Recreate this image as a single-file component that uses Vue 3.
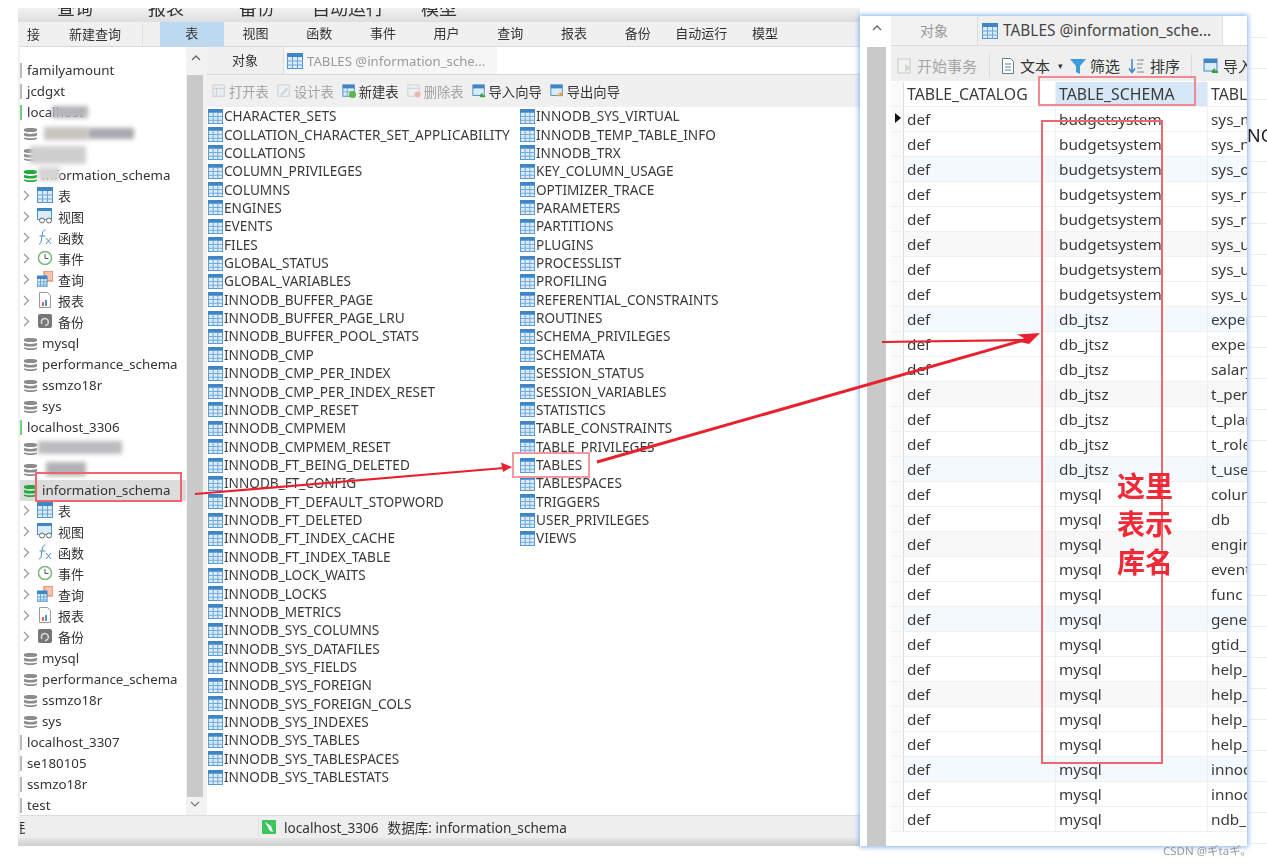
<script setup>
const topMenu = ['查询', '报表', '备份', '自动运行', '模型']
const ribbon = ['表', '视图', '函数', '事件', '用户', '查询', '报表', '备份', '自动运行', '模型']
const groups = [
  { icon: 'i-tbl', label: '表' }, { icon: 'i-view', label: '视图' }, { icon: 'i-fx', label: '函数' },
  { icon: 'i-clock', label: '事件' }, { icon: 'i-query', label: '查询' }, { icon: 'i-report', label: '报表' },
  { icon: 'i-backup', label: '备份' }
]
const groupRows = groups.map(g => ({ ...g, kind: 'group' }))
const db = (label, green, active) => ({ kind: 'db', label, green, active })
const conn = (label, green) => ({ kind: 'conn', label, green })
const tree = [
  conn('familyamount'), conn('jcdgxt'), conn('localhost', true),
  db(''), db(''), db('information_schema', true), ...groupRows,
  db('mysql'), db('performance_schema'), db('ssmzo18r'), db('sys'),
  conn('localhost_3306', true), db(''), db(''), db('information_schema', true, true), ...groupRows,
  db('mysql'), db('performance_schema'), db('ssmzo18r'), db('sys'),
  conn('localhost_3307'), conn('se180105'), conn('ssmzo18r'), conn('test')
]
const objTools = [
  { icon: 'i-open', label: '打开表', dim: true }, { icon: 'i-design', label: '设计表', dim: true },
  { icon: 'i-new', label: '新建表' }, { icon: 'i-del', label: '删除表', dim: true },
  { icon: 'i-imp', label: '导入向导' }, { icon: 'i-exp', label: '导出向导' }
]
const tables = ['CHARACTER_SETS','COLLATION_CHARACTER_SET_APPLICABILITY','COLLATIONS','COLUMN_PRIVILEGES','COLUMNS','ENGINES','EVENTS','FILES','GLOBAL_STATUS','GLOBAL_VARIABLES','INNODB_BUFFER_PAGE','INNODB_BUFFER_PAGE_LRU','INNODB_BUFFER_POOL_STATS','INNODB_CMP','INNODB_CMP_PER_INDEX','INNODB_CMP_PER_INDEX_RESET','INNODB_CMP_RESET','INNODB_CMPMEM','INNODB_CMPMEM_RESET','INNODB_FT_BEING_DELETED','INNODB_FT_CONFIG','INNODB_FT_DEFAULT_STOPWORD','INNODB_FT_DELETED','INNODB_FT_INDEX_CACHE','INNODB_FT_INDEX_TABLE','INNODB_LOCK_WAITS','INNODB_LOCKS','INNODB_METRICS','INNODB_SYS_COLUMNS','INNODB_SYS_DATAFILES','INNODB_SYS_FIELDS','INNODB_SYS_FOREIGN','INNODB_SYS_FOREIGN_COLS','INNODB_SYS_INDEXES','INNODB_SYS_TABLES','INNODB_SYS_TABLESPACES','INNODB_SYS_TABLESTATS','INNODB_SYS_VIRTUAL','INNODB_TEMP_TABLE_INFO','INNODB_TRX','KEY_COLUMN_USAGE','OPTIMIZER_TRACE','PARAMETERS','PARTITIONS','PLUGINS','PROCESSLIST','PROFILING','REFERENTIAL_CONSTRAINTS','ROUTINES','SCHEMA_PRIVILEGES','SCHEMATA','SESSION_STATUS','SESSION_VARIABLES','STATISTICS','TABLE_CONSTRAINTS','TABLE_PRIVILEGES','TABLES','TABLESPACES','TRIGGERS','USER_PRIVILEGES','VIEWS']
const third = ['sys_m','sys_n','sys_o','sys_ro','sys_ro','sys_u','sys_u','sys_u','exper','exper','salary','t_per','t_plan','t_role','t_use','colun','db','engin','event','func','gene','gtid_','help_','help_','help_','help_','innoc','innoc','ndb_']
const tintOf = i => (i % 6 === 2 ? 'tint-b' : i % 6 === 5 ? 'tint-g' : '')
const rows = third.map((c, i) => ({ schema: i < 8 ? 'budgetsystem' : i < 15 ? 'db_jtsz' : 'mysql', c, tint: tintOf(i) }))
const mosaic = [
  { x: 52, y: 106, w: 36, h: 12, c: '#b5b5bb' }, { x: 44, y: 127, w: 44, h: 13, c: '#c8c4c0' },
  { x: 88, y: 128, w: 46, h: 11, c: '#a8a8ae' }, { x: 30, y: 146, w: 56, h: 18, c: '#cfcfcf' },
  { x: 38, y: 167, w: 22, h: 14, c: '#d6d4d6' }, { x: 38, y: 441, w: 84, h: 13, c: '#b9bcc0' },
  { x: 46, y: 462, w: 40, h: 14, c: '#b0b2b4' }
]
</script>

<template>
  <div class="desk">
    <svg class="defs" width="0" height="0" aria-hidden="true">
      <symbol id="i-tbl" viewBox="0 0 16 16"><rect x=".5" y=".5" width="15" height="15" fill="#dcebf8" stroke="#4f94cf"/><rect x="0" y="0" width="16" height="4" fill="#3f86c6"/><path d="M0 8h16M0 12h16M5.500 4v12M10.500 4v12" stroke="#6aa6da" fill="none"/></symbol>
      <symbol id="i-view" viewBox="0 0 16 16"><rect x=".5" y=".5" width="14" height="11" fill="#dcebf8" stroke="#4f94cf"/><rect width="15" height="3" fill="#3f86c6"/><circle cx="5" cy="12.500" r="2.500" fill="#fff" stroke="#666"/><circle cx="12" cy="12.500" r="2.500" fill="#fff" stroke="#666"/></symbol>
      <symbol id="i-fx" viewBox="0 0 16 16"><path d="M2 15c2 0 2-2 2.500-5l1-6c.4-2 1.500-3 3-3M2.500 7h6" stroke="#4f8ec4" fill="none"/><path d="M9 9l5 6M14 9l-5 6" stroke="#4f8ec4" fill="none"/></symbol>
      <symbol id="i-clock" viewBox="0 0 16 16"><circle cx="8" cy="8" r="6.500" fill="#fff" stroke="#7cb77c" stroke-width="1.500"/><path d="M8 4v4.500h3.500" stroke="#555" fill="none"/></symbol>
      <symbol id="i-query" viewBox="0 0 16 16"><rect x="7" y="0" width="9" height="10" fill="#f9c3b0" stroke="#e5734d"/><rect x="0" y="5" width="10" height="11" fill="#dcebf8" stroke="#3f86c6"/><rect y="5" width="10" height="3" fill="#3f86c6"/><path d="M0 11h10M0 14h10M3.500 8v8M6.800 8v8" stroke="#6aa6da"/></symbol>
      <symbol id="i-report" viewBox="0 0 16 16"><path d="M2.500.5h8l3 3v12h-11z" fill="#fff" stroke="#999"/><rect x="5" y="10" width="2" height="4" fill="#e8664d"/><rect x="8" y="8" width="2" height="6" fill="#4f94cf"/></symbol>
      <symbol id="i-backup" viewBox="0 0 16 16"><rect x="1" y="1" width="14" height="14" rx="2" fill="#777"/><path d="M5 11a3.500 3.500 0 1 1 3 1.500" stroke="#ddd" fill="none" stroke-width="1.500"/></symbol>
      <symbol id="i-db" viewBox="0 0 16 16"><path d="M1 3.500C1 1.500 15 1.500 15 3.500v1.500C15 7 1 7 1 5zM1 7.300c3 1.500 11 1.500 14 0v2.500c0 2-14 2-14 0zM1 12c3 1.500 11 1.500 14 0v1c0 2.500-14 2.500-14 0z" fill="currentColor"/></symbol>
      <symbol id="i-open" viewBox="0 0 16 16"><rect x="1" y="1" width="13" height="13" fill="#e9edf0" stroke="#c3ccd3"/><path d="M1 5h13M5 5v9" stroke="#c3ccd3"/></symbol>
      <symbol id="i-design" viewBox="0 0 16 16"><rect x="1" y="1" width="13" height="13" fill="#eef1f3" stroke="#c3ccd3"/><path d="M4 11l7-7 2 2-7 7H4z" fill="#cfd6dc"/></symbol>
      <symbol id="i-new" viewBox="0 0 16 16"><rect x="1" y="1" width="13" height="13" fill="#dcebf8" stroke="#3f86c6"/><rect x="1" y="1" width="13" height="4" fill="#3f86c6"/><path d="M1 9h13M6 5v9" stroke="#6aa6da"/><circle cx="12" cy="12" r="4" fill="#58b947"/></symbol>
      <symbol id="i-del" viewBox="0 0 16 16"><rect x="1" y="1" width="13" height="13" fill="#edf0f2" stroke="#c8d0d6"/><path d="M1 5h13" stroke="#c8d0d6"/><circle cx="12" cy="12" r="3.500" fill="#efb7a9"/></symbol>
      <symbol id="i-imp" viewBox="0 0 16 16"><rect x="1" y="1" width="13" height="12" fill="#dcebf8" stroke="#3f86c6"/><rect x="1" y="1" width="13" height="4" fill="#3f86c6"/><path d="M15 14H9m0 0l3-3" stroke="#3f9e3c" stroke-width="2" fill="none"/></symbol>
      <symbol id="i-exp" viewBox="0 0 16 16"><rect x="1" y="1" width="13" height="12" fill="#dcebf8" stroke="#3f86c6"/><rect x="1" y="1" width="13" height="4" fill="#3f86c6"/><path d="M8 13h6m0 0l-3-3" stroke="#ea9a2a" stroke-width="2" fill="none"/></symbol>
      <symbol id="i-tx" viewBox="0 0 16 16"><rect x="1" y="1" width="12" height="14" fill="#f3f3f3" stroke="#c8c8c8"/><path d="M8 6l6 4-6 4z" fill="#c6dcc6"/></symbol>
      <symbol id="i-text" viewBox="0 0 16 16"><path d="M2.500.5h8l3 3v12h-11z" fill="#fff" stroke="#5d7f99"/><path d="M5 6h6M5 9h6M5 12h6" stroke="#5d7f99"/></symbol>
      <symbol id="i-filter" viewBox="0 0 16 16"><path d="M0 1h16l-6 7v8l-4-2V8z" fill="#3b9bdc"/></symbol>
      <symbol id="i-sort" viewBox="0 0 16 16"><path d="M4 1v13M1 10.500L4 14.500l3-4" stroke="#3f86c6" fill="none" stroke-width="1.500"/><path d="M9 2h7M9 6h6M9 10h5M9 14h7" stroke="#888"/></symbol>
    </svg>

    <section class="win-back soft">
      <div class="menu-strip">
        <span v-for="m in topMenu" :key="m">{{ m }}</span>
      </div>
      <div class="ribbon">
        <span class="rb-first">接</span>
        <span class="rb-new">新建查询</span>
        <i class="rb-sep"></i>
        <span v-for="(r, i) in ribbon" :key="r + i" class="rb" :class="{ on: i === 0 }">{{ r }}</span>
      </div>
      <div class="body">
        <aside class="tree">
          <div class="clip-row"></div>
          <div v-for="(n, i) in tree" :key="i" class="node" :class="[n.kind, { active: n.active }]">
            <i v-if="n.kind === 'conn'" class="bar" :class="{ g: n.green }"></i>
            <template v-if="n.kind === 'db'">
              <svg class="ico dbi" :class="{ g: n.green }"><use href="#i-db"/></svg>
            </template>
            <template v-if="n.kind === 'group'">
              <svg class="chev" viewBox="0 0 7 11"><path d="M1 1l4.500 4.500L1 10" fill="none" stroke="#9a9a9a" stroke-width="1.300"/></svg>
              <svg class="ico"><use :href="'#' + n.icon"/></svg>
            </template>
            <span>{{ n.label }}</span>
          </div>
        </aside>
        <div class="rail">
          <svg class="up" viewBox="0 0 10 6"><path d="M1 5l4-4 4 4" fill="none" stroke="#666" stroke-width="1.300"/></svg>
          <div class="thumb"></div>
          <svg class="down" viewBox="0 0 10 6"><path d="M1 1l4 4 4-4" fill="none" stroke="#777" stroke-width="1.200"/></svg>
        </div>
        <div class="main">
          <div class="tabs">
            <span class="tab-obj">对象</span>
            <span class="tab-t">
              <svg class="ico"><use href="#i-tbl"/></svg>
              <span>TABLES @information_sche...</span>
            </span>
          </div>
          <div class="obj-tools">
            <span v-for="t in objTools" :key="t.label" class="otool" :class="{ dim: t.dim }">
              <svg class="ico s14"><use :href="'#' + t.icon"/></svg>{{ t.label }}
            </span>
          </div>
          <div class="objs">
            <div v-for="t in tables" :key="t" class="obj">
              <svg class="ico"><use href="#i-tbl"/></svg><span>{{ t }}</span>
            </div>
          </div>
        </div>
      </div>
      <div class="status">
        <span class="st-left">连</span>
        <span class="st-main">
          <svg class="st-ico" viewBox="0 0 14 14"><rect width="14" height="14" rx="1" fill="#3cc45a"/><path d="M3 2l5 9 3 1-2-6z" fill="#fff"/></svg>
          <span>localhost_3306</span><span class="st-db">数据库: information_schema</span>
        </span>
      </div>
      <div class="cut-bottom"></div>
    </section>

    <div class="back-bits"></div>

    <section class="win-front soft">
      <div class="front-rail">
        <svg class="up2" viewBox="0 0 10 6"><path d="M1 5l4-4 4 4" fill="none" stroke="#666" stroke-width="1.300"/></svg>
        <div class="thumb2"></div>
      </div>
      <div class="front-main">
        <div class="ftabs">
          <span class="ftab-obj">对象</span>
          <span class="ftab-t">
            <svg class="ico"><use href="#i-tbl"/></svg>
            <span>TABLES @information_sche...</span>
          </span>
        </div>
        <div class="ftools">
          <span class="ft dim tx"><svg class="ico"><use href="#i-tx"/></svg>开始事务</span>
          <i class="ft-sep"></i>
          <span class="ft txt"><svg class="ico"><use href="#i-text"/></svg>文本<em>▾</em></span>
          <span class="ft fl"><svg class="ico"><use href="#i-filter"/></svg>筛选</span>
          <span class="ft so"><svg class="ico"><use href="#i-sort"/></svg>排序</span>
          <i class="ft-sep s2"></i>
          <span class="ft im"><svg class="ico"><use href="#i-imp"/></svg>导入</span>
        </div>
        <div class="grid">
          <div class="gr head">
            <span class="g0"></span>
            <span class="g1">TABLE_CATALOG</span>
            <span class="g2 sel">TABLE_SCHEMA</span>
            <span class="g3">TABLE_NAME</span>
          </div>
          <div v-for="(r, i) in rows" :key="i" class="gr" :class="r.tint">
            <span class="g0"><i v-if="i === 0" class="caret"></i></span>
            <span class="g1">def</span>
            <span class="g2">{{ r.schema }}</span>
            <span class="g3">{{ r.c }}</span>
          </div>
        </div>
      </div>
    </section>

    <span class="ng">NG</span>

    <div class="mosaic">
      <i v-for="(m, i) in mosaic" :key="i" class="mo" :style="{ left: m.x + 'px', top: m.y + 'px', width: m.w + 'px', height: m.h + 'px', background: m.c }"></i>
    </div>

    <div class="box b1"></div>
    <div class="box b2"></div>
    <div class="box b3"></div>
    <div class="box b4"></div>
    <svg class="arrows" width="1267" height="866" viewBox="0 0 1267 866">
      <g fill="none" stroke="#e7222e" stroke-width="2.200">
        <path d="M195 494L504 468"/>
        <path d="M882 342L1024 340"/>
        <path d="M597 462L1024 340" stroke-width="3"/>
      </g>
      <g fill="#e7222e">
        <path d="M512 467L501 462.500 503 472z"/>
        <path d="M1040 333L1017 334.500 1024 338 1020 342 1029 344z"/>
      </g>
    </svg>
    <div class="note">这里<br>表示<br>库名</div>
    <div class="mark">CSDN @ギtaギ。</div>
  </div>
</template>

<style scoped>
.desk { position: relative; width: 1267px; height: 866px; overflow: hidden; background: #fff; font-family: "Noto Sans", "Noto Sans CJK SC", sans-serif; color: #333; }
.defs { position: absolute; }
.soft { filter: blur(.35px); }
.ico { width: 16px; height: 16px; flex: none; }
.s14 { width: 14px; height: 14px; }

.back-bits { position: absolute; left: 1250px; top: 8px; width: 17px; height: 838px; background: repeating-linear-gradient(#fff 0 30px, #ececec 30px 31px); background-position: 0 -1px; }
.ng { position: absolute; left: 1247px; top: 123px; font-size: 18px; line-height: 24px; color: #222; }

.win-back { position: absolute; left: 18px; top: 8px; width: 842px; height: 838px; display: flex; flex-direction: column; background: #f0f0f0; overflow: hidden; }
.menu-strip { height: 14px; flex: none; overflow: hidden; background: linear-gradient(#f2f2f2, #dedede); display: flex; font-size: 18px; padding-left: 39px; }
.menu-strip span { line-height: 18px; margin-top: -9px; margin-right: 55px; height: 23px; }
.menu-strip span:nth-child(3), .menu-strip span:nth-child(4) { margin-right: 37px; }
.ribbon { height: 25px; flex: none; margin-left: 2px; display: flex; align-items: center; font-size: 13px; background: #f0f0f0; border-bottom: 1px solid #d8d8d8; box-sizing: border-box; }
.rb-first { width: 20px; padding-left: 7px; box-sizing: border-box; margin-bottom: 2px; }
.rb-new { width: 81px; text-align: right; margin-bottom: 2px; }
.rb-sep { width: 1px; height: 22px; background: #e0e0e0; margin-left: 21px; margin-right: 17px; }
.rb { width: 63.700px; text-align: center; line-height: 23px; height: 25px; white-space: nowrap; }
.rb.on { background: #bcd9f0; }

.body { flex: 1; min-height: 0; display: flex; margin-left: 2px; background: #fff; }
.tree { width: 166px; flex: none; overflow: hidden; background: #fff; }
.clip-row { height: 12.500px; }
.node { height: 21px; display: flex; align-items: center; font-size: 13.300px; white-space: nowrap; position: relative; }
.node.conn { padding-left: 7px; }
.node.active { background: #dcdcdc; }
.bar { position: absolute; left: 0; top: 3px; width: 1.500px; height: 15px; background: #bbb; }
.bar.g { background: #6fd07f; }
.node.db { padding-left: 3px; gap: 4px; }
.dbi { width: 15px; height: 15px; color: #8c8c8c; }
.dbi.g { color: #25a83e; }
.node.group { padding-left: 3px; }
.chev { width: 7px; height: 11px; flex: none; margin-right: 7px; }
.node.group span { margin-left: 5px; font-size: 13px; margin-bottom: 2px; }
.node.group .ico { margin-bottom: 2px; }
.node.group .chev { margin-bottom: 2px; }
.rail { width: 21px; flex: none; position: relative; background: #f2f2f2; }
.up { position: absolute; left: 5px; top: 8px; width: 10px; height: 6px; }
.thumb { position: absolute; left: 1px; top: 28px; width: 16px; height: 722px; background: #c9c9c9; }
.down { position: absolute; left: 4px; top: 754px; width: 10px; height: 6px; }
.main { flex: 1; min-width: 0; display: flex; flex-direction: column; background: #fff; }
.tabs { height: 27px; flex: none; display: flex; border-bottom: 1px solid #d8d8d8; box-sizing: content-box; }
.tab-obj { width: 76px; background: #f0f0f0; text-align: center; line-height: 27px; font-size: 13px; }
.tab-t { width: 214px; background: #f6f6f6; border-left: 1px solid #ddd; display: flex; align-items: center; gap: 4px; padding-left: 3px; box-sizing: border-box; font-size: 13.200px; color: #9a9a9a; white-space: nowrap; }
.obj-tools { height: 32px; flex: none; background: #f0f0f0; display: flex; align-items: center; font-size: 13.300px; padding-left: 5px; }
.otool { display: inline-flex; align-items: center; gap: 3px; margin-right: 8px; white-space: nowrap; }
.otool.dim { color: #a3a3a3; }
.objs { flex: 1; min-height: 0; display: grid; grid-auto-flow: column; grid-template-rows: repeat(37, 18.360px); grid-template-columns: 312px 1fr; align-content: start; overflow: hidden; padding-bottom: 1px; }
.obj { display: flex; align-items: center; font-size: 13.600px; line-height: 17px; white-space: nowrap; padding-left: 1px; color: #3a3a3a; }
.obj .ico { width: 15px; height: 15px; margin-right: 1px; }
.obj span { margin-bottom: 1px; }
.status { height: 23px; flex: none; margin-left: 2px; background: #eee; border-top: 1px solid #ddd; box-sizing: border-box; display: flex; align-items: center; font-size: 13.600px; }
.st-left { width: 238px; flex: none; overflow: hidden; border-right: 1px solid #e2e2e2; height: 100%; line-height: 22px; text-indent: -8px; }
.st-main { display: flex; align-items: center; padding-left: 2px; }
.st-ico { width: 14px; height: 14px; margin-left: 1px; margin-right: 8px; }
.st-db { margin-left: 9px; }
.cut-bottom { height: 8px; flex: none; background: linear-gradient(#e6e6e6, #cfcfcf); }

.win-front { position: absolute; left: 860px; top: 16px; width: 387px; height: 830px; background: #fff; display: flex; box-shadow: 0 0 5px 1px #7fb0ee; }
.front-rail { width: 31px; flex: none; position: relative; background: #fff; }
.up2 { position: absolute; left: 12px; top: 9px; width: 10px; height: 6px; }
.thumb2 { position: absolute; left: 7px; top: 31px; width: 19px; bottom: 0; background: #c9c9c9; }
.front-main { flex: 1; min-width: 0; display: flex; flex-direction: column; overflow: hidden; }
.ftabs { height: 30px; flex: none; display: flex; border-bottom: 1px solid #dcdcdc; box-sizing: border-box; }
.ftab-obj { width: 87px; background: #f2f2f2; text-align: center; line-height: 30px; font-size: 14px; color: #999; border-right: 1px solid #ddd; box-sizing: border-box; }
.ftab-t { width: 245px; flex: none; background: #f0f0f0; display: flex; align-items: center; gap: 5px; padding-left: 4px; box-sizing: border-box; font-size: 15.400px; color: #444; white-space: nowrap; border-right: 1px solid #ddd; overflow: hidden; }
.ftools { height: 35px; flex: none; background: #efefef; display: flex; align-items: center; font-size: 15px; white-space: nowrap; padding-top: 4px; box-sizing: border-box; }
.ft { display: inline-flex; align-items: center; gap: 4px; color: #333; }
.ft.dim { color: #a5a5a5; }
.tx { margin-left: 6px; }
.ft-sep { width: 1px; height: 24px; background: #dcdcdc; margin-left: 12px; flex: none; }
.txt { margin-left: 10px; }
.txt em { font-style: normal; font-size: 9px; margin-left: 4px; }
.fl { margin-left: 7px; }
.so { margin-left: 8px; gap: 6px; }
.s2 { margin-left: 11px; }
.im { margin-left: 11px; }
.grid { flex: 1; min-height: 0; overflow: hidden; padding-top: 1px; }
.gr { height: 25px; display: flex; font-size: 15.300px; line-height: 24px; border-bottom: 1px solid #f0f0f0; box-sizing: border-box; color: #3a3a3a; }
.gr.tint-b { background: #f4f9fd; }
.gr.tint-g { background: #f8f8f8; }
.gr.head { font-size: 15.800px; background: #fff; }
.gr span { box-sizing: border-box; padding-left: 3px; border-right: 1px solid #efefef; white-space: nowrap; overflow: hidden; }
.g0 { width: 13px; flex: none; position: relative; border-right-color: #ddd !important; background: #fafafa; padding: 0 !important; }
.g1 { width: 152px; flex: none; }
.g2 { width: 152px; flex: none; }
.g3 { width: 60px; flex: none; }
.sel { background: #d6e8f8; }
.caret { position: absolute; left: 4px; top: 6px; width: 0; height: 0; border-left: 6px solid #111; border-top: 5.500px solid transparent; border-bottom: 5.500px solid transparent; }

.mosaic { position: absolute; inset: 0; pointer-events: none; }
.mo { position: absolute; filter: blur(2px); }
.box { position: absolute; border: 2px solid #ee6670; box-sizing: border-box; }
.b1 { left: 35px; top: 472px; width: 147px; height: 30px; }
.b2 { left: 512px; top: 452px; width: 78px; height: 26px; border-color: #f29aa0; }
.b3 { left: 1038px; top: 76px; width: 158px; height: 30px; border-color: #f08a90; }
.b4 { left: 1041px; top: 120px; width: 122px; height: 644px; }
.arrows { position: absolute; left: 0; top: 0; pointer-events: none; }
.note { position: absolute; left: 1117px; top: 467px; font-size: 28px; line-height: 38px; font-weight: 700; color: #f02a36; }
.mark { position: absolute; left: 1163px; top: 843px; font-size: 11.500px; line-height: 16px; color: #999; font-family: "Noto Sans", "Noto Sans CJK JP", sans-serif; }
</style>
